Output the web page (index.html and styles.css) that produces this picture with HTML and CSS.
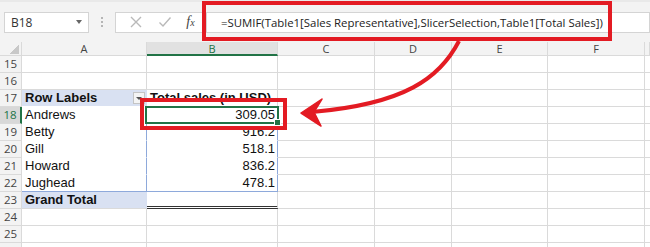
FILE: index.html
```html
<!DOCTYPE html>
<html lang="en">
<head>
    <meta charset="UTF-8">
    <title>SUMIF with slicer selection</title>
    <link rel="stylesheet" href="styles.css">
</head>
<body>
    <!-- formula bar -->
    <div class="toolbar">
        <div class="namebox">
            <span>B18</span>
            <span class="caret"></span>
        </div>
        <div class="grip"><i></i><i></i><i></i></div>
        <div class="fx-buttons">
            <svg width="14" height="14" viewBox="0 0 14 14"><path d="M2 2 L12 12 M12 2 L2 12" stroke="#b9b9b9" stroke-width="1.4" fill="none"/></svg>
            <svg width="14" height="14" viewBox="0 0 14 14"><path d="M1.5 7.5 L5 11 L12.5 2.5" stroke="#b9b9b9" stroke-width="1.4" fill="none"/></svg>
            <span class="fx">f<small>x</small></span>
        </div>
        <div class="formula">=SUMIF(Table1[Sales Representative],SlicerSelection,Table1[Total Sales])</div>
    </div>

    <!-- worksheet -->
    <div class="sheet">
        <div class="corner"></div>
        <div class="col">A</div>
        <div class="col active">B</div>
        <div class="col">C</div>
        <div class="col">D</div>
        <div class="col">E</div>
        <div class="col">F</div>
        <div class="col"></div>

        <div class="row">15</div><div class="cell"></div><div class="cell"></div><div class="cell"></div><div class="cell"></div><div class="cell"></div><div class="cell"></div><div class="cell"></div>
        <div class="row">16</div><div class="cell"></div><div class="cell"></div><div class="cell"></div><div class="cell"></div><div class="cell"></div><div class="cell"></div><div class="cell"></div>

        <div class="row">17</div>
        <div class="cell pv-label">Row Labels<span class="filter"></span></div>
        <div class="cell pv-title">Total sales (in USD)</div>
        <div class="cell"></div><div class="cell"></div><div class="cell"></div><div class="cell"></div><div class="cell"></div>

        <div class="row active">18</div>
        <div class="cell pv-name">Andrews</div>
        <div class="cell pv-value selected">309.05</div>
        <div class="cell"></div><div class="cell"></div><div class="cell"></div><div class="cell"></div><div class="cell"></div>

        <div class="row">19</div>
        <div class="cell pv-name">Betty</div>
        <div class="cell pv-value">916.2</div>
        <div class="cell"></div><div class="cell"></div><div class="cell"></div><div class="cell"></div><div class="cell"></div>

        <div class="row">20</div>
        <div class="cell pv-name">Gill</div>
        <div class="cell pv-value">518.1</div>
        <div class="cell"></div><div class="cell"></div><div class="cell"></div><div class="cell"></div><div class="cell"></div>

        <div class="row">21</div>
        <div class="cell pv-name">Howard</div>
        <div class="cell pv-value">836.2</div>
        <div class="cell"></div><div class="cell"></div><div class="cell"></div><div class="cell"></div><div class="cell"></div>

        <div class="row">22</div>
        <div class="cell pv-name last">Jughead</div>
        <div class="cell pv-value last">478.1</div>
        <div class="cell"></div><div class="cell"></div><div class="cell"></div><div class="cell"></div><div class="cell"></div>

        <div class="row">23</div>
        <div class="cell pv-total">Grand Total</div>
        <div class="cell pv-total-value"></div>
        <div class="cell"></div><div class="cell"></div><div class="cell"></div><div class="cell"></div><div class="cell"></div>

        <div class="row">24</div><div class="cell"></div><div class="cell"></div><div class="cell"></div><div class="cell"></div><div class="cell"></div><div class="cell"></div><div class="cell"></div>
        <div class="row">25</div><div class="cell"></div><div class="cell"></div><div class="cell"></div><div class="cell"></div><div class="cell"></div><div class="cell"></div><div class="cell"></div>
        <div class="row"></div><div class="cell"></div><div class="cell"></div><div class="cell"></div><div class="cell"></div><div class="cell"></div><div class="cell"></div><div class="cell"></div>
    </div>

    <!-- red annotations drawn over the screenshot -->
    <svg class="callouts" width="650" height="247" viewBox="0 0 650 247">
        <rect x="204" y="3" width="406" height="36" fill="none" stroke="#e31b23" stroke-width="4"/>
        <rect x="142" y="100" width="143" height="28" fill="none" stroke="#e31b23" stroke-width="4"/>
        <path d="M459 41 C 440 78, 405 104, 312 112" fill="none" stroke="#e31b23" stroke-width="4"/>
        <path d="M301 113 L322 99 L314 112 L321 126 Z" fill="#e31b23" stroke="#e31b23" stroke-width="1.5" stroke-linejoin="round"/>
    </svg>
</body>
</html>
```

FILE: styles.css
```css
body {
    margin: 0;
    width: 650px;
    height: 247px;
    overflow: hidden;
    position: relative;
    background-color: #fff;
    font-family: "Liberation Sans", Arial, sans-serif;
}

/* formula bar */
.toolbar {
    display: flex;
    align-items: center;
    height: 42px;
    background-color: #f3f3f3;
    border-top: 2px solid #e9e9e9;
    box-sizing: border-box;
}
.namebox {
    display: flex;
    align-items: center;
    justify-content: space-between;
    width: 85px;
    height: 21px;
    margin-left: 4px;
    padding: 0 6px;
    box-sizing: border-box;
    background-color: #fff;
    border: 1px solid #d4d4d4;
    font-family: "Open Sans", sans-serif;
    font-size: 12px;
    color: #333;
}
.caret {
    width: 0;
    height: 0;
    border-left: 3.5px solid transparent;
    border-right: 3.5px solid transparent;
    border-top: 4px solid #666;
}
.grip {
    display: flex;
    flex-direction: column;
    align-items: center;
    gap: 2px;
    width: 26px;
}
.grip i {
    width: 2px;
    height: 2px;
    background-color: #b5b5b5;
}
.fx-buttons {
    display: flex;
    align-items: center;
    justify-content: space-around;
    width: 88px;
    height: 21px;
    padding-left: 6px;
    box-sizing: border-box;
    background-color: #fff;
    border: 1px solid #d4d4d4;
}
.fx {
    font-family: "Liberation Serif", serif;
    font-style: italic;
    font-size: 14px;
    color: #444;
}
.fx small {
    font-size: 10px;
}
.formula {
    flex: 1;
    height: 21px;
    margin-left: 3px;
    padding-left: 14px;
    box-sizing: border-box;
    background-color: #fff;
    border: 1px solid #d4d4d4;
    font-family: "Open Sans", sans-serif;
    font-size: 11.4px;
    line-height: 19px;
    color: #222;
    white-space: nowrap;
}

/* worksheet grid */
.sheet {
    display: grid;
    grid-template-columns: 22px 125px 131px 97px 77px 96px 97px 5px;
    grid-template-rows: 14px;
    grid-auto-rows: 17px;
}
.sheet > div {
    box-sizing: border-box;
    border-right: 1px solid #dadada;
    border-bottom: 1px solid #dadada;
}
.corner {
    background-color: #f3f3f3;
    background-image: linear-gradient(135deg, transparent 60%, #c8c8c8 60%);
    background-size: 13px 10px;
    background-repeat: no-repeat;
    background-position: 6px 2px;
}
.col {
    background-color: #f3f3f3;
    text-align: center;
    font-family: "Open Sans", sans-serif;
    font-size: 11px;
    line-height: 13px;
    color: #444;
}
.col.active {
    background-color: #e1e1e1;
    color: #217346;
    border-bottom: 2px solid #217346;
}
.row {
    background-color: #f3f3f3;
    text-align: center;
    font-family: "Open Sans", sans-serif;
    font-size: 11.5px;
    line-height: 16px;
    color: #444;
}
.row.active {
    background-color: #d8d8d8;
    border-right: 2px solid #217346;
    color: #217346;
}
.cell {
    font-size: 13px;
    line-height: 16px;
    color: #111;
    padding: 0 3px;
    white-space: nowrap;
}

/* pivot table */
.sheet .pv-label {
    display: flex;
    justify-content: space-between;
    align-items: center;
    padding-right: 1px;
    background-color: #d9e1f2;
    border-right-color: #d9e1f2;
    border-bottom-color: #fff;
    font-weight: bold;
}
.filter {
    position: relative;
    width: 12px;
    height: 12px;
    box-sizing: border-box;
    background-color: #f4f4f4;
    border: 1px solid #c4c4c4;
}
.filter::after {
    content: "";
    position: absolute;
    left: 2px;
    top: 4px;
    border-left: 3px solid transparent;
    border-right: 3px solid transparent;
    border-top: 3px solid #555;
}
.sheet .pv-title {
    font-weight: bold;
    border-bottom-color: #fff;
}
.sheet .pv-name {
    border-right-color: #8ea9db;
    border-bottom-color: #fff;
}
.sheet .pv-value {
    position: relative;
    text-align: right;
    padding-right: 2px;
    border-right-color: #8ea9db;
    border-bottom-color: #fff;
}
.sheet .last {
    border-bottom-color: #8ea9db;
}
.selected::after {
    content: "";
    position: absolute;
    left: -2px;
    top: -1px;
    right: -2px;
    bottom: -1px;
    border: 2px solid #217346;
}
.selected::before {
    content: "";
    position: absolute;
    right: -4px;
    bottom: -3px;
    width: 5px;
    height: 5px;
    background-color: #217346;
    border: 1px solid #fff;
    z-index: 1;
}
.sheet .pv-total {
    background-color: #d9e1f2;
    border-right-color: #d9e1f2;
    font-weight: bold;
}
.sheet .pv-total-value {
    border-bottom: 3px double #333;
}

.callouts {
    position: absolute;
    top: 0;
    left: 0;
    pointer-events: none;
}
```
